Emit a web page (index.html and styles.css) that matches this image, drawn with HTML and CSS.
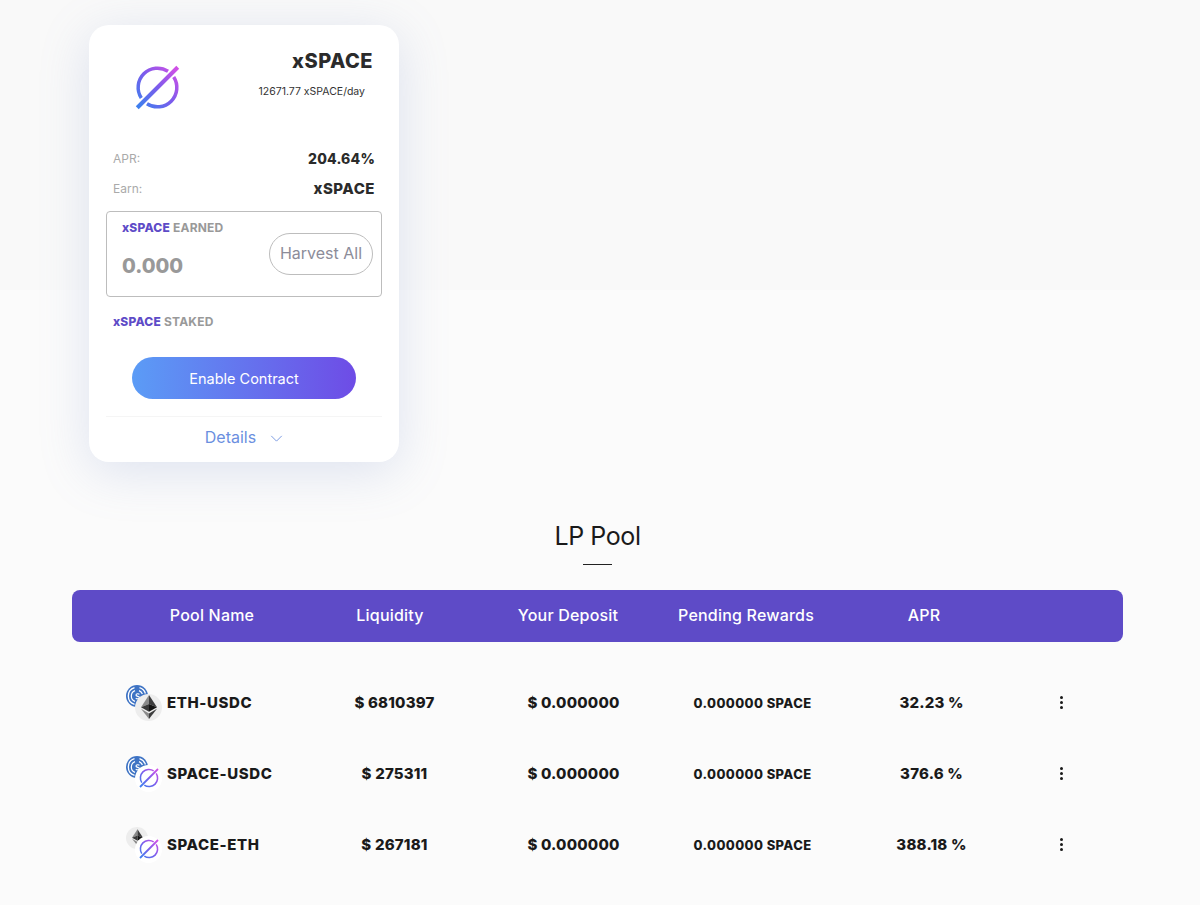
FILE: index.html
```html
<!DOCTYPE html>
<html lang="en">
<head>
    <meta charset="UTF-8">
    <meta name="viewport" content="width=device-width, initial-scale=1.0">
    <title>xSPACE Farms</title>
    <link rel="stylesheet" href="styles.css">
</head>
<body>
    <svg class="icon-defs" aria-hidden="true">
        <defs>
            <linearGradient id="spaceGrad" gradientUnits="userSpaceOnUse" x1="4" y1="40" x2="40" y2="4">
                <stop offset="0" stop-color="#3f7fee"/>
                <stop offset="0.5" stop-color="#7a5cec"/>
                <stop offset="1" stop-color="#cf50e6"/>
            </linearGradient>
            <symbol id="spaceLogo" viewBox="0 0 44 44">
                <path d="M32.3 6.15A18.9 18.9 0 0 0 6.15 32.3M11.7 37.85A18.9 18.9 0 0 0 37.85 11.7" fill="none" stroke="url(#spaceGrad)" stroke-width="3.4"/>
                <path d="M2.2 41.8L41.8 2.2" fill="none" stroke="url(#spaceGrad)" stroke-width="4"/>
            </symbol>
            <symbol id="usdcLogo" viewBox="0 0 22 22">
                <circle cx="11" cy="11" r="11" fill="#3e73c4"/>
                <path d="M8.5 2.6A8.8 8.8 0 0 0 8.5 19.4M13.5 2.6A8.8 8.8 0 0 1 19.4 8.5" fill="none" stroke="#fff" stroke-width="1.3"/>
                <path d="M9 5.6A5.8 5.8 0 0 0 9 16.4M13 5.6A5.8 5.8 0 0 1 16.4 9" fill="none" stroke="#fff" stroke-width="1.2"/>
                <path d="M13.4 9.4C12.6 8.4 10.2 8.5 10 10C9.8 11.8 13.6 10.9 13.4 12.7C13.2 14 10.8 14.1 9.8 13.1" fill="none" stroke="#fff" stroke-width="1.2"/>
            </symbol>
            <symbol id="ethLogo" viewBox="0 0 16 24">
                <path d="M8 0L0 12.2L8 9Z" fill="#8a8a8a"/>
                <path d="M8 0L16 12.2L8 9Z" fill="#3c3c3d"/>
                <path d="M8 9L0 12.2L8 16.8Z" fill="#393939"/>
                <path d="M8 9L16 12.2L8 16.8Z" fill="#141414"/>
                <path d="M0 13.8L8 24V18.4Z" fill="#8a8a8a"/>
                <path d="M16 13.8L8 24V18.4Z" fill="#3c3c3d"/>
            </symbol>
        </defs>
    </svg>

    <div class="farm-card">
        <div class="farm-head">
            <svg class="farm-logo"><use href="#spaceLogo"/></svg>
            <div class="farm-title">
                <h2>xSPACE</h2>
                <p>12671.77 xSPACE/day</p>
            </div>
        </div>
        <div class="stat-row stat-apr"><span>APR:</span><strong>204.64%</strong></div>
        <div class="stat-row stat-earn"><span>Earn:</span><strong>xSPACE</strong></div>
        <div class="earned-box">
            <div>
                <div class="token-label"><b>xSPACE</b> EARNED</div>
                <div class="earned-value">0.000</div>
            </div>
            <button class="harvest-btn">Harvest All</button>
        </div>
        <div class="token-label staked-label"><b>xSPACE</b> STAKED</div>
        <button class="enable-btn">Enable Contract</button>
        <div class="details-row">
            <span>Details</span>
            <svg class="chevron" viewBox="0 0 14 8"><path d="M1 1L7 7L13 1" fill="none" stroke="#6b8fdf" stroke-width="1"/></svg>
        </div>
    </div>

    <div class="pool-section">
        <h1 class="pool-title">LP Pool</h1>
        <div class="pool-rule"></div>
        <div class="pool-header">
            <div>Pool Name</div>
            <div>Liquidity</div>
            <div>Your Deposit</div>
            <div>Pending Rewards</div>
            <div>APR</div>
            <div></div>
        </div>
        <div class="pool-row">
            <div class="pool-name">
                <span class="pair">
                    <span class="coin-back"><svg class="usdc"><use href="#usdcLogo"/></svg></span>
                    <span class="coin-front coin-grey"><svg class="eth"><use href="#ethLogo"/></svg></span>
                </span>
                ETH-USDC
            </div>
            <div>$ 6810397</div>
            <div>$ 0.000000</div>
            <div class="pending">0.000000 SPACE</div>
            <div>32.23 %</div>
            <div class="kebab"><i></i><i></i><i></i></div>
        </div>
        <div class="pool-row">
            <div class="pool-name">
                <span class="pair">
                    <span class="coin-back"><svg class="usdc"><use href="#usdcLogo"/></svg></span>
                    <span class="coin-front"><svg class="space"><use href="#spaceLogo"/></svg></span>
                </span>
                SPACE-USDC
            </div>
            <div>$ 275311</div>
            <div>$ 0.000000</div>
            <div class="pending">0.000000 SPACE</div>
            <div>376.6 %</div>
            <div class="kebab"><i></i><i></i><i></i></div>
        </div>
        <div class="pool-row">
            <div class="pool-name">
                <span class="pair">
                    <span class="coin-back coin-grey"><svg class="eth-small"><use href="#ethLogo"/></svg></span>
                    <span class="coin-front"><svg class="space"><use href="#spaceLogo"/></svg></span>
                </span>
                SPACE-ETH
            </div>
            <div>$ 267181</div>
            <div>$ 0.000000</div>
            <div class="pending">0.000000 SPACE</div>
            <div>388.18 %</div>
            <div class="kebab"><i></i><i></i><i></i></div>
        </div>
    </div>
</body>
</html>
```

FILE: styles.css
```css
html {
    background: #fbfbfb;
}
body {
    margin: 0;
    padding: 25px 0 0;
    font-family: Inter, "Liberation Sans", sans-serif;
    color: #1a1a1a;
    background: linear-gradient(#f9f9f9, #f9f9f9) top / 100% 290px no-repeat;
}
.icon-defs {
    position: absolute;
    width: 0;
    height: 0;
}
button {
    font-family: inherit;
    cursor: pointer;
}

/* farm card */
.farm-card {
    box-sizing: border-box;
    width: 310px;
    height: 437px;
    margin-left: 89px;
    padding: 0 17px;
    background: #fff;
    border-radius: 20px;
    box-shadow: 0 10px 50px rgba(120, 140, 200, 0.22);
}
.farm-head {
    display: flex;
    justify-content: space-between;
    height: 118px;
}
.farm-logo {
    width: 45px;
    height: 45px;
    margin: 40px 0 0 29px;
}
.farm-title {
    display: flex;
    flex-direction: column;
    align-items: flex-end;
    padding-right: 9px;
}
.farm-title h2 {
    margin: 23px 0 0;
    font-size: 20px;
    line-height: 26px;
    font-weight: 800;
    letter-spacing: 0.5px;
    color: #2b2b2b;
}
.farm-title p {
    margin: 11px 8px 0 0;
    font-size: 10.5px;
    line-height: 14px;
    color: #333;
}
.stat-row {
    display: flex;
    justify-content: space-between;
    align-items: center;
    height: 30px;
    padding: 0 7px;
}
.stat-row span {
    font-size: 12px;
    color: #aaa;
}
.stat-row strong {
    font-size: 15px;
    font-weight: 800;
    letter-spacing: 0.5px;
    color: #2b2b2b;
}
.stat-apr strong {
    font-size: 14px;
    letter-spacing: 0.2px;
}
.earned-box {
    box-sizing: border-box;
    display: flex;
    justify-content: space-between;
    height: 86px;
    margin-top: 8px;
    padding: 0 8px 0 15px;
    border: 1px solid #bdbdbd;
    border-radius: 4px;
}
.token-label {
    font-size: 12px;
    line-height: 16px;
    font-weight: 700;
    letter-spacing: 0.2px;
    color: #999;
}
.token-label b {
    font-weight: 800;
    color: #5e4bc7;
}
.earned-box .token-label {
    margin-top: 8px;
}
.earned-value {
    margin-top: 16px;
    font-size: 20px;
    line-height: 28px;
    font-weight: 800;
    color: #999;
}
.harvest-btn {
    width: 104px;
    height: 42px;
    margin-top: 21px;
    padding: 0 0 2px;
    background: #fff;
    border: 1px solid #bdbdbd;
    border-radius: 21px;
    font-size: 16px;
    color: #8c8c99;
}
.staked-label {
    margin: 17px 0 0 7px;
}
.enable-btn {
    display: block;
    width: 224px;
    height: 42px;
    margin: 27px auto 0;
    padding: 0;
    border: none;
    border-radius: 21px;
    background: linear-gradient(90deg, #5b9cf6, #6e4ce6);
    font-size: 14.5px;
    color: #fff;
}
.details-row {
    display: flex;
    justify-content: center;
    align-items: center;
    gap: 14px;
    height: 40px;
    margin: 17px 0 0;
    border-top: 1px solid #f5f5f5;
    font-size: 16px;
    color: #6b8fdf;
}
.chevron {
    width: 13px;
    height: 7px;
    margin-top: 2px;
}

/* lp pool table */
.pool-section {
    width: 1051px;
    margin: 57px 0 0 72px;
}
.pool-title {
    margin: 0;
    font-size: 25px;
    line-height: 34px;
    font-weight: 400;
    letter-spacing: -0.4px;
    text-align: center;
    color: #1a1a1a;
}
.pool-rule {
    width: 29px;
    height: 1px;
    margin: 11px auto 25px;
    background: #222;
}
.pool-header {
    display: grid;
    grid-template-columns: repeat(5, 178px) 94px;
    align-items: center;
    height: 52px;
    padding: 0 0 2px 51px;
    box-sizing: border-box;
    background: #5e4bc7;
    border-radius: 8px;
    font-size: 16px;
    font-weight: 500;
    letter-spacing: 0.2px;
    color: #fff;
    text-align: center;
}
.pool-header + .pool-row {
    margin-top: 25px;
}
.pool-row {
    display: grid;
    grid-template-columns: repeat(5, 179px) 80px;
    align-items: center;
    height: 71px;
    padding-left: 54px;
    font-size: 15px;
    font-weight: 800;
    letter-spacing: 0.2px;
    text-align: center;
    color: #1a1a1a;
}
.pool-name {
    display: flex;
    align-items: center;
    gap: 5px;
    text-align: left;
    letter-spacing: 0.6px;
}
.pending {
    font-size: 13px;
    letter-spacing: 0.4px;
}
.pair {
    position: relative;
    display: block;
    width: 36px;
    height: 36px;
}
.coin-back,
.coin-front {
    position: absolute;
    display: flex;
    align-items: center;
    justify-content: center;
    border-radius: 50%;
}
.coin-back {
    left: 0;
    top: 0;
    width: 22px;
    height: 22px;
}
.coin-front {
    left: 9px;
    top: 9px;
    width: 27px;
    height: 27px;
    background: #fff;
}
.coin-grey {
    background: #ededed;
}
.usdc {
    width: 22px;
    height: 22px;
}
.eth {
    width: 16px;
    height: 24px;
}
.eth-small {
    width: 11px;
    height: 17px;
}
.space {
    width: 20px;
    height: 20px;
}
.kebab {
    display: flex;
    flex-direction: column;
    align-items: center;
    gap: 2px;
}
.kebab i {
    width: 3px;
    height: 3px;
    border-radius: 50%;
    background: #1a1a1a;
}
```
